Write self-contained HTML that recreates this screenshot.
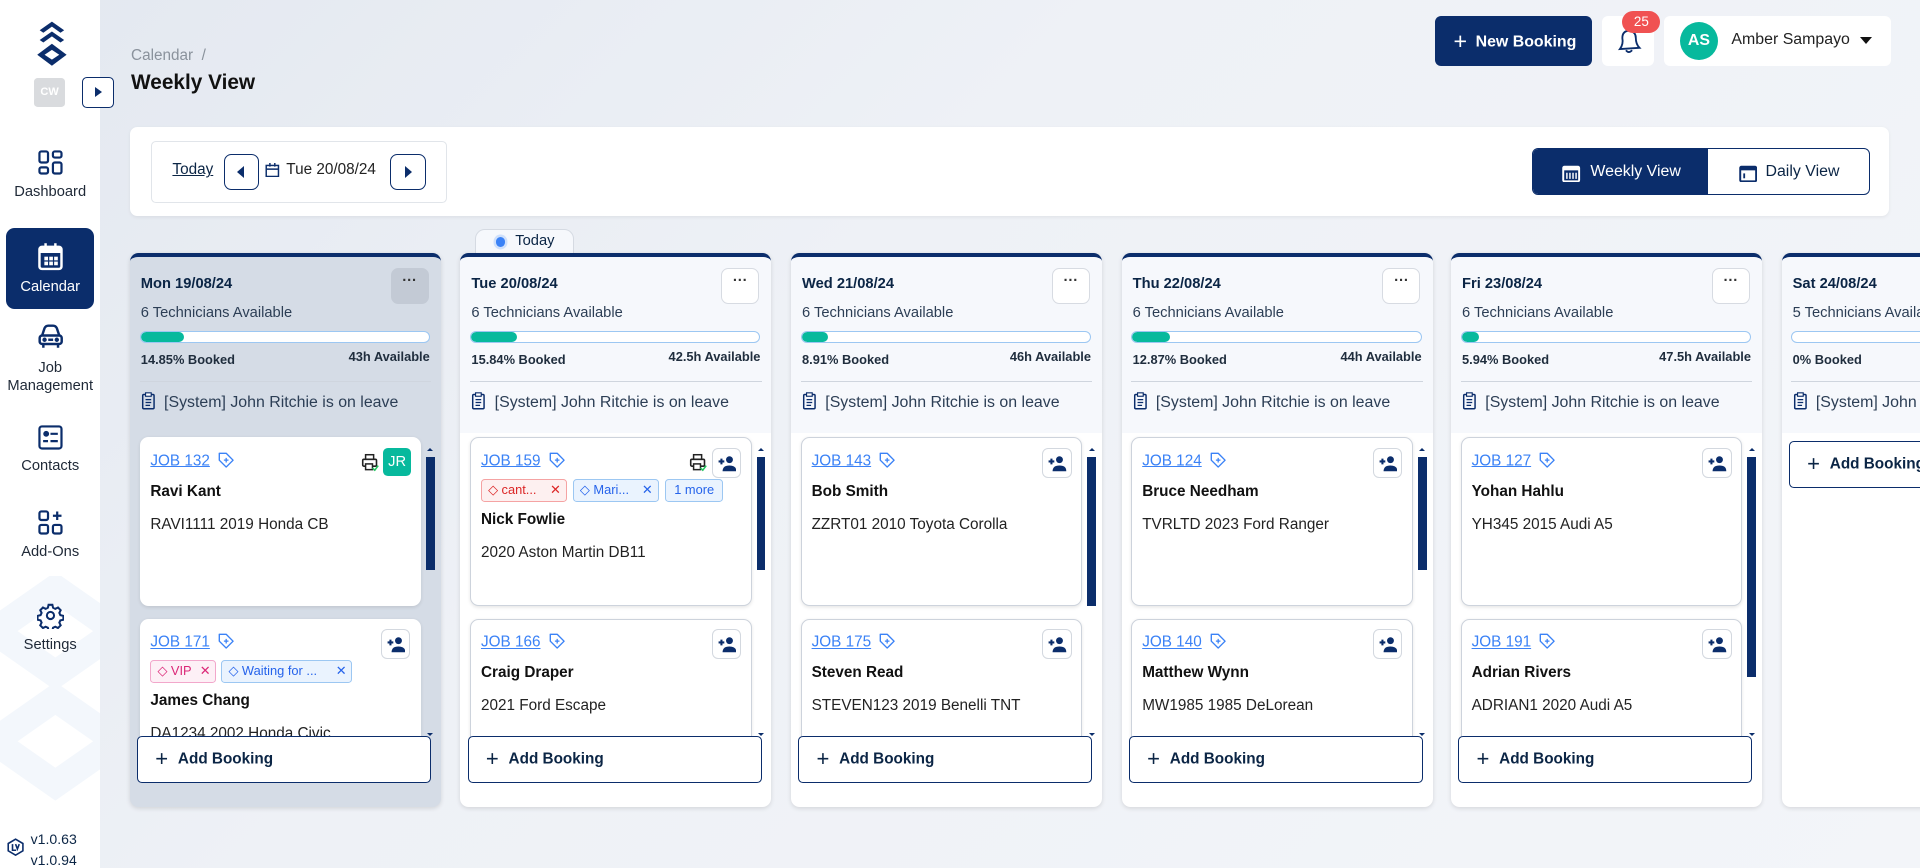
<!DOCTYPE html>
<html><head><meta charset="utf-8">
<style>
*{box-sizing:border-box;margin:0;padding:0}
html,body{width:1920px;height:868px;overflow:hidden}
body{font-family:"Liberation Sans",Arial,sans-serif;color:#1f2937;background:#eef1f6}
#root{zoom:1.22449;width:1568px;height:709px;position:relative;overflow:hidden;background:linear-gradient(135deg,#e3e8f0 0%,#eef1f6 40%,#f3f5f9 100%)}
.abs{position:absolute}
.side{left:0;top:0;width:82px;height:709px;background:#fff;overflow:hidden}
.nav{position:absolute;left:0;width:82px;text-align:center;font-size:12px;color:#1f2937}
.nav svg{display:block;margin:0 auto 6px}
.col{position:absolute;top:207px;width:254px;height:452px;border-radius:7px;border-top:4px solid #0b2d6b;background:#fff;box-shadow:0 1px 4px rgba(0,0,0,.12);overflow:hidden}
.col .hd{position:absolute;left:0;top:0;right:0;height:143px;background:#f6f8fc}
.col.mon,.col.mon .hd{background:#d5dce6}
.date{position:absolute;left:9px;top:15px;font-size:12px;font-weight:bold;color:#0b2545}
.dots{position:absolute;left:213px;top:9px;width:31px;height:29px;border-radius:6px;background:#fff;border:1px solid #d7dbe2;text-align:center;font-size:12px;line-height:20px;color:#333;font-weight:bold}
.mon .dots{background:#c3cad5;border-color:#c3cad5}
.tech{position:absolute;left:9px;top:39px;font-size:12px;color:#2c3e55}
.bar{position:absolute;left:8px;top:60px;width:237px;height:10px;border:1px solid #9cc7f2;border-radius:6px;background:#fff;overflow:hidden}
.bar i{display:block;height:100%;background:#07b99d;border-radius:6px}
.bk{position:absolute;left:9px;top:77px;font-size:10.5px;font-weight:bold;color:#1f2d3d}
.av{position:absolute;right:9px;top:75px;font-size:10.5px;font-weight:bold;color:#1f2d3d}
.div{position:absolute;left:8px;right:8px;top:101px;border-top:1px solid #cfd5de}
.sys{position:absolute;left:9px;top:109px;font-size:13px;color:#2c3e55;white-space:nowrap}
.sys svg{vertical-align:-3px;margin-right:6px}
.cards{position:absolute;left:0;top:143px;width:254px;height:250px;overflow:hidden}
.card{position:absolute;left:8px;width:230px;background:#fff;border:1px solid #cdd3dc;border-radius:7px;box-shadow:0 1px 3px rgba(0,0,0,.1)}
.mon .card{border-color:#fff}
.job{position:absolute;left:8px;top:10px;font-size:12.5px;color:#3b82f6;text-decoration:underline;white-space:nowrap}
.job svg{vertical-align:-3px;margin-left:6px}
.nm{position:absolute;left:8px;font-size:12.5px;font-weight:bold;color:#111}
.vh{position:absolute;left:8px;font-size:12.5px;color:#222;white-space:nowrap}
.act{position:absolute;right:8px;top:8px;width:24px;height:24px;border:1px solid #d3d8df;border-radius:5px;background:#fff}
.act svg{position:absolute;left:4px;top:4px}
.tag{position:absolute;top:33px;height:19px;border-radius:3px;font-size:10.5px;line-height:17px;padding-left:5px;white-space:nowrap}
.sb{position:absolute;left:242px;top:156px;width:7px;height:235px}
.sb i{position:absolute;left:0;top:7px;width:7px;height:92px;background:#0b2d6b}
.sb:before{content:"";position:absolute;left:1px;top:0;border:3px solid transparent;border-bottom:3px solid #0b2d6b;border-top:0}
.sb:after{content:"";position:absolute;left:1px;bottom:0;border:3px solid transparent;border-top:3px solid #0b2d6b;border-bottom:0}
.add{position:absolute;left:6px;top:391px;width:240px;height:38px;border:1px solid #0b2d6b;border-radius:4px;background:#fff;font-size:12.5px;font-weight:bold;color:#0b2545;line-height:36px;padding-left:14px}
.add span{font-size:18px;font-weight:normal;vertical-align:-2px;margin-right:8px}
</style></head><body><div id="root">

<!-- sidebar -->
<div class="abs side">
  <svg class="abs" style="left:-10px;top:470px" width="110" height="190" viewBox="0 0 110 190"><path d="M55 10 L105 45 L55 80 L5 45Z M55 100 L105 135 L55 170 L5 135Z" fill="none" stroke="#f3f7fc" stroke-width="22"/></svg>
  <svg class="abs" style="left:29px;top:15px" width="26" height="40" viewBox="0 0 26 40"><path d="M13 3 L23 10 L20 12 L13 7 L6 12 L3 10Z M13 11 L23 18 L20 20 L13 15 L6 20 L3 18Z M13 21 L25 30 L13 39 L1 30Z M13 26 L7 30 L13 34 L19 30Z" fill="#0b2d6b" fill-rule="evenodd"/></svg>
  <div class="abs" style="left:28px;top:64px;width:25px;height:23px;background:#d9dbde;border-radius:3px;color:#fff;font-size:9px;font-weight:bold;text-align:center;line-height:23px">CW</div>
  <div class="nav" style="top:122px"><svg width="22" height="22" viewBox="0 0 22 22" fill="none" stroke="#0b2d6b" stroke-width="1.8"><rect x="2" y="2" width="7" height="9" rx="1.5"/><rect x="13" y="2" width="7" height="5" rx="1.5"/><rect x="2" y="15" width="7" height="5" rx="1.5"/><rect x="13" y="11" width="7" height="9" rx="1.5"/></svg>Dashboard</div>
  <div class="abs" style="left:5px;top:186px;width:72px;height:66px;background:#0b2d6b;border-radius:7px"></div>
  <div class="nav" style="top:198px;color:#fff"><svg width="22" height="24" viewBox="0 0 22 24"><rect x="2" y="4" width="18" height="18" rx="2" fill="none" stroke="#fff" stroke-width="2"/><rect x="2" y="4" width="18" height="5" fill="#fff"/><rect x="6" y="1" width="2" height="5" fill="#fff"/><rect x="14" y="1" width="2" height="5" fill="#fff"/><g fill="#fff"><rect x="6" y="12" width="3" height="3"/><rect x="10" y="12" width="3" height="3"/><rect x="14" y="12" width="3" height="3"/><rect x="6" y="16" width="3" height="3"/><rect x="10" y="16" width="3" height="3"/><rect x="14" y="16" width="3" height="3"/></g></svg>Calendar</div>
  <div class="nav" style="top:263px;line-height:15px"><svg width="24" height="24" viewBox="0 0 24 24" fill="none" stroke="#0b2d6b" stroke-width="2"><path d="M5 11 L7 5 Q8 3 10 3 H14 Q16 3 17 5 L19 11"/><rect x="3" y="11" width="18" height="7" rx="2"/><path d="M6 18v3M18 18v3"/><circle cx="7" cy="14.5" r=".8" fill="#0b2d6b"/><circle cx="17" cy="14.5" r=".8" fill="#0b2d6b"/><path d="M10 14.5h4"/></svg>Job<br>Management</div>
  <div class="nav" style="top:346px"><svg width="22" height="22" viewBox="0 0 22 22" fill="none" stroke="#0b2d6b" stroke-width="1.8"><rect x="2" y="2" width="18" height="18" rx="2"/><circle cx="7.5" cy="8" r="1.5" fill="#0b2d6b"/><path d="M11 8h6M11 14h6M5 14h4"/></svg>Contacts</div>
  <div class="nav" style="top:416px"><svg width="22" height="22" viewBox="0 0 22 22" fill="none" stroke="#0b2d6b" stroke-width="1.8"><rect x="2" y="2" width="7" height="7" rx="1.5"/><rect x="2" y="13" width="7" height="7" rx="1.5"/><rect x="13" y="13" width="7" height="7" rx="1.5"/><path d="M16.5 2v7M13 5.5h7"/></svg>Add-Ons</div>
  <div class="nav" style="top:492px"><svg width="22" height="22" viewBox="0 0 24 24" fill="none" stroke="#0b2d6b" stroke-width="1.8"><circle cx="12" cy="12" r="3.2"/><path d="M10.3 2.5h3.4l.6 2.6 2 1 2.4-1.2 2.4 2.4-1.2 2.4.9 2 2.7.7v3.4l-2.7.6-.9 2 1.2 2.4-2.4 2.4-2.4-1.2-2 .9-.6 2.7h-3.4l-.6-2.7-2-.9-2.4 1.2-2.4-2.4 1.2-2.4-.9-2-2.7-.6v-3.4l2.7-.7.9-2-1.2-2.4 2.4-2.4 2.4 1.2 2-1z"/></svg>Settings</div>
  <svg class="abs" style="left:6px;top:684px" width="14" height="15" viewBox="0 0 14 15" fill="none" stroke="#0b2d6b" stroke-width="1.3"><path d="M7 1 L13 4.5 V10.5 L7 14 L1 10.5 V4.5Z"/><path d="M4.5 5v5h3M7 5l1.5 4 1.5-4"/></svg>
  <div class="abs" style="left:25px;top:677px;font-size:11.5px;color:#0b2545;line-height:17px">v1.0.63<br>v1.0.94</div>
</div>
<div class="abs" style="left:67px;top:63px;width:26px;height:25px;border:1px solid #0b2d6b;border-radius:4px;background:#fff"><div class="abs" style="left:10px;top:7px;border-left:6px solid #0b2d6b;border-top:4.5px solid transparent;border-bottom:4.5px solid transparent"></div></div>

<!-- header -->
<div class="abs" style="left:107px;top:38px;font-size:12.5px;color:#8a929c">Calendar &nbsp;/</div>
<div class="abs" style="left:107px;top:58px;font-size:17px;font-weight:bold;color:#111">Weekly View</div>

<div class="abs" style="left:1172px;top:13px;width:128px;height:41px;background:#0b2d6b;border-radius:5px;color:#fff;font-size:13px;font-weight:bold;line-height:41px;padding-left:15px"><span style="font-size:19px;font-weight:normal;vertical-align:-2px;margin-right:7px">+</span>New Booking</div>
<div class="abs" style="left:1308px;top:13px;width:43px;height:41px;background:#fff;border-radius:5px"><svg class="abs" style="left:11px;top:9px" width="22" height="24" viewBox="0 0 22 24" fill="none" stroke="#0b2d6b" stroke-width="1.5"><path d="M4 18 Q7 14 6 9 Q6 3 12 3 Q17 4 17 9 Q17 14 20 17 Z M9 19 Q11 22 14 19"/></svg></div>
<div class="abs" style="left:1325px;top:9px;width:31px;height:18px;background:#f05252;border-radius:9px;color:#fff;font-size:11px;text-align:center;line-height:18px">25</div>
<div class="abs" style="left:1359px;top:13px;width:185px;height:41px;background:#fff;border-radius:5px">
  <div class="abs" style="left:13px;top:5px;width:31px;height:31px;border-radius:50%;background:#07b99d;color:#fff;font-weight:bold;font-size:13px;text-align:center;line-height:31px">AS</div>
  <div class="abs" style="left:55px;top:12px;font-size:13px;color:#222">Amber Sampayo</div>
  <div class="abs" style="left:160px;top:17px;border-top:6px solid #111;border-left:5px solid transparent;border-right:5px solid transparent"></div>
</div>

<!-- toolbar -->
<div class="abs" style="left:106px;top:104px;width:1437px;height:72px;background:#fff;border-radius:6px;box-shadow:0 1px 3px rgba(0,0,0,.06)"></div>
<div class="abs" style="left:123px;top:115px;width:242px;height:51px;border:1px solid #e1e5ea;border-radius:4px;background:#fff">
  <div class="abs" style="left:17px;top:16px;font-size:12.5px;color:#0b2545;text-decoration:underline">Today</div>
  <div class="abs" style="left:59px;top:10px;width:29px;height:29px;border:1px solid #0b2d6b;border-radius:6px"><div class="abs" style="left:10px;top:9px;border-right:6px solid #0b2d6b;border-top:5px solid transparent;border-bottom:5px solid transparent"></div></div>
  <svg class="abs" style="left:93px;top:17px" width="12" height="12" viewBox="0 0 12 12" fill="none" stroke="#0b2d6b" stroke-width="1.2"><rect x="1" y="2" width="10" height="9"/><path d="M1 5h10M4 0v3M8 0v3"/></svg>
  <div class="abs" style="left:110px;top:16px;font-size:12.5px;color:#222">Tue 20/08/24</div>
  <div class="abs" style="left:195px;top:10px;width:29px;height:29px;border:1px solid #0b2d6b;border-radius:6px"><div class="abs" style="left:11px;top:9px;border-left:6px solid #0b2d6b;border-top:5px solid transparent;border-bottom:5px solid transparent"></div></div>
</div>
<div class="abs" style="left:1251px;top:121px;width:276px;height:38px;border:1px solid #0b2d6b;border-radius:5px;background:#fff;overflow:hidden">
  <div class="abs" style="left:0;top:0;width:143px;height:38px;background:#0b2d6b"></div>
  <svg class="abs" style="left:24px;top:11px" width="15" height="16" viewBox="0 0 15 16"><rect x="1" y="3" width="13" height="12" rx="1" fill="none" stroke="#fff" stroke-width="1.6"/><rect x="1" y="3" width="13" height="3" fill="#fff"/><path d="M4 8v5M6.5 8v5M9 8v5M11.5 8v5" stroke="#fff" stroke-width="1.2"/></svg>
  <div class="abs" style="left:47px;top:11px;font-size:13px;color:#fff">Weekly View</div>
  <svg class="abs" style="left:168px;top:11px" width="15" height="16" viewBox="0 0 15 16"><rect x="1" y="3" width="13" height="12" rx="1" fill="none" stroke="#0b2d6b" stroke-width="1.6"/><rect x="1" y="3" width="13" height="3" fill="#0b2d6b"/><rect x="3.5" y="8.5" width="1.5" height="4" fill="#0b2d6b"/></svg>
  <div class="abs" style="left:190px;top:11px;font-size:13px;color:#0b2545">Daily View</div>
</div>

<!-- Today tab -->
<div class="abs" style="left:388px;top:187px;width:81px;height:20px;background:#f6f8fc;border:1px solid #d5dae2;border-bottom:0;border-radius:8px 8px 0 0;font-size:12px;color:#0b2545;line-height:19px;padding-left:32px"><span class="abs" style="left:16px;top:6px;width:8px;height:8px;border-radius:50%;background:#3b82f6;box-shadow:0 0 0 2px #cfe0fb"></span>Today</div>

<svg width="0" height="0" style="position:absolute"><defs>
<symbol id="tg" viewBox="0 0 16 16"><path d="M2 2h6l6 6-6 6-6-6z" fill="none" stroke="#3b82f6" stroke-width="1.2" stroke-linejoin="round"/><path d="M8 6v4M6 8h4" stroke="#3b82f6" stroke-width="1.1"/></symbol>
<symbol id="ap" viewBox="0 0 16 16"><circle cx="10" cy="5" r="3" fill="#0b2d6b"/><path d="M4 15q0-5 6-5t6 5z" fill="#0b2d6b"/><path d="M3 4v5M0.5 6.5h5" stroke="#0b2d6b" stroke-width="1.8"/></symbol>
<symbol id="nt" viewBox="0 0 14 16"><rect x="1.5" y="2.5" width="10" height="12.5" rx="1" fill="none" stroke="#0b2d6b" stroke-width="1.3"/><rect x="4" y="1" width="5" height="3" fill="#fff" stroke="#0b2d6b" stroke-width="1"/><path d="M4 7h5M4 9.5h5M4 12h4" stroke="#0b2d6b" stroke-width="1.1"/></symbol>
<symbol id="pr" viewBox="0 0 16 16"><rect x="4" y="1.5" width="7" height="4" fill="none" stroke="#222" stroke-width="1.3"/><rect x="1.5" y="5.5" width="12" height="6" rx="1" fill="none" stroke="#222" stroke-width="1.4"/><rect x="4" y="9.5" width="6" height="5" fill="#fff" stroke="#222" stroke-width="1.3"/><path d="M10 13l2 2 3-4" stroke="#22c55e" stroke-width="1.3" fill="none"/></symbol>
</defs></svg>

<!-- MON -->
<div class="col mon" style="left:106px">
 <div class="hd"></div>
 <div class="date">Mon 19/08/24</div><div class="dots">···</div>
 <div class="tech">6 Technicians Available</div>
 <div class="bar"><i style="width:15%"></i></div>
 <div class="bk">14.85% Booked</div><div class="av">43h Available</div>
 <div class="div"></div>
 <div class="sys"><svg width="13" height="16"><use href="#nt"/></svg>[System] John Ritchie is on leave</div>
 <div class="cards">
  <div class="card" style="top:4px;height:138px">
   <div class="job">JOB 132<svg width="15" height="15"><use href="#tg"/></svg></div>
   <svg class="abs" style="left:180px;top:12px" width="15" height="15"><use href="#pr"/></svg>
   <div class="abs" style="left:198px;top:8px;width:23px;height:23px;border-radius:4px;background:#07b99d;color:#fff;font-size:12px;text-align:center;line-height:23px">JR</div>
   <div class="nm" style="top:36px">Ravi Kant</div><div class="vh" style="top:63px">RAVI1111 2019 Honda CB</div>
  </div>
  <div class="card" style="top:152px;height:130px">
   <div class="job">JOB 171<svg width="15" height="15"><use href="#tg"/></svg></div>
   <div class="act"><svg width="15" height="15"><use href="#ap"/></svg></div>
   <div class="tag" style="left:8px;width:54px;background:#fdf0f6;border:1px solid #f2a7cb;color:#db2777">◇ VIP <span style="position:absolute;right:4px">✕</span></div>
   <div class="tag" style="left:66px;width:107px;background:#eaf3fe;border:1px solid #9cc7f2;color:#2563eb">◇ Waiting for ... <span style="position:absolute;right:4px">✕</span></div>
   <div class="nm" style="top:59px">James Chang</div><div class="vh" style="top:86px">DA1234 2002 Honda Civic</div>
  </div>
 </div>
 <div class="sb"><i></i></div>
 <div class="add"><span>+</span>Add Booking</div>
</div>

<!-- TUE -->
<div class="col" style="left:376px">
 <div class="hd"></div>
 <div class="date">Tue 20/08/24</div><div class="dots">···</div>
 <div class="tech">6 Technicians Available</div>
 <div class="bar"><i style="width:16%"></i></div>
 <div class="bk">15.84% Booked</div><div class="av">42.5h Available</div>
 <div class="div"></div>
 <div class="sys"><svg width="13" height="16"><use href="#nt"/></svg>[System] John Ritchie is on leave</div>
 <div class="cards">
  <div class="card" style="top:4px;height:138px">
   <div class="job">JOB 159<svg width="15" height="15"><use href="#tg"/></svg></div>
   <svg class="abs" style="left:178px;top:12px" width="15" height="15"><use href="#pr"/></svg>
   <div class="act"><svg width="15" height="15"><use href="#ap"/></svg></div>
   <div class="tag" style="left:8px;width:70px;background:#fdf0f0;border:1px solid #f5a3a3;color:#dc2626">◇ cant... <span style="position:absolute;right:4px">✕</span></div>
   <div class="tag" style="left:83px;width:70px;background:#eaf3fe;border:1px solid #9cc7f2;color:#2563eb">◇ Mari... <span style="position:absolute;right:4px">✕</span></div>
   <div class="tag" style="left:158px;width:48px;background:#eaf3fe;border:1px solid #9cc7f2;color:#2563eb;padding-left:7px">1 more</div>
   <div class="nm" style="top:59px">Nick Fowlie</div><div class="vh" style="top:86px">2020 Aston Martin DB11</div>
  </div>
  <div class="card" style="top:152px;height:130px">
   <div class="job">JOB 166<svg width="15" height="15"><use href="#tg"/></svg></div>
   <div class="act"><svg width="15" height="15"><use href="#ap"/></svg></div>
   <div class="nm" style="top:36px">Craig Draper</div><div class="vh" style="top:63px">2021 Ford Escape</div>
  </div>
 </div>
 <div class="sb"><i></i></div>
 <div class="add"><span>+</span>Add Booking</div>
</div>

<!-- WED -->
<div class="col" style="left:646px">
 <div class="hd"></div>
 <div class="date">Wed 21/08/24</div><div class="dots">···</div>
 <div class="tech">6 Technicians Available</div>
 <div class="bar"><i style="width:9%"></i></div>
 <div class="bk">8.91% Booked</div><div class="av">46h Available</div>
 <div class="div"></div>
 <div class="sys"><svg width="13" height="16"><use href="#nt"/></svg>[System] John Ritchie is on leave</div>
 <div class="cards">
  <div class="card" style="top:4px;height:138px">
   <div class="job">JOB 143<svg width="15" height="15"><use href="#tg"/></svg></div>
   <div class="act"><svg width="15" height="15"><use href="#ap"/></svg></div>
   <div class="nm" style="top:36px">Bob Smith</div><div class="vh" style="top:63px">ZZRT01 2010 Toyota Corolla</div>
  </div>
  <div class="card" style="top:152px;height:130px">
   <div class="job">JOB 175<svg width="15" height="15"><use href="#tg"/></svg></div>
   <div class="act"><svg width="15" height="15"><use href="#ap"/></svg></div>
   <div class="nm" style="top:36px">Steven Read</div><div class="vh" style="top:63px">STEVEN123 2019 Benelli TNT</div>
  </div>
 </div>
 <div class="sb"><i style="height:122px"></i></div>
 <div class="add"><span>+</span>Add Booking</div>
</div>

<!-- THU -->
<div class="col" style="left:916px">
 <div class="hd"></div>
 <div class="date">Thu 22/08/24</div><div class="dots">···</div>
 <div class="tech">6 Technicians Available</div>
 <div class="bar"><i style="width:13%"></i></div>
 <div class="bk">12.87% Booked</div><div class="av">44h Available</div>
 <div class="div"></div>
 <div class="sys"><svg width="13" height="16"><use href="#nt"/></svg>[System] John Ritchie is on leave</div>
 <div class="cards">
  <div class="card" style="top:4px;height:138px">
   <div class="job">JOB 124<svg width="15" height="15"><use href="#tg"/></svg></div>
   <div class="act"><svg width="15" height="15"><use href="#ap"/></svg></div>
   <div class="nm" style="top:36px">Bruce Needham</div><div class="vh" style="top:63px">TVRLTD 2023 Ford Ranger</div>
  </div>
  <div class="card" style="top:152px;height:130px">
   <div class="job">JOB 140<svg width="15" height="15"><use href="#tg"/></svg></div>
   <div class="act"><svg width="15" height="15"><use href="#ap"/></svg></div>
   <div class="nm" style="top:36px">Matthew Wynn</div><div class="vh" style="top:63px">MW1985 1985 DeLorean</div>
  </div>
 </div>
 <div class="sb"><i style="height:92px"></i></div>
 <div class="add"><span>+</span>Add Booking</div>
</div>

<!-- FRI -->
<div class="col" style="left:1185px">
 <div class="hd"></div>
 <div class="date">Fri 23/08/24</div><div class="dots">···</div>
 <div class="tech">6 Technicians Available</div>
 <div class="bar"><i style="width:6%"></i></div>
 <div class="bk">5.94% Booked</div><div class="av">47.5h Available</div>
 <div class="div"></div>
 <div class="sys"><svg width="13" height="16"><use href="#nt"/></svg>[System] John Ritchie is on leave</div>
 <div class="cards">
  <div class="card" style="top:4px;height:138px">
   <div class="job">JOB 127<svg width="15" height="15"><use href="#tg"/></svg></div>
   <div class="act"><svg width="15" height="15"><use href="#ap"/></svg></div>
   <div class="nm" style="top:36px">Yohan Hahlu</div><div class="vh" style="top:63px">YH345 2015 Audi A5</div>
  </div>
  <div class="card" style="top:152px;height:130px">
   <div class="job">JOB 191<svg width="15" height="15"><use href="#tg"/></svg></div>
   <div class="act"><svg width="15" height="15"><use href="#ap"/></svg></div>
   <div class="nm" style="top:36px">Adrian Rivers</div><div class="vh" style="top:63px">ADRIAN1 2020 Audi A5</div>
  </div>
 </div>
 <div class="sb"><i style="height:180px"></i></div>
 <div class="add"><span>+</span>Add Booking</div>
</div>

<!-- SAT -->
<div class="col" style="left:1455px">
 <div class="hd"></div>
 <div class="date">Sat 24/08/24</div>
 <div class="tech">5 Technicians Available</div>
 <div class="bar"><i style="width:0"></i></div>
 <div class="bk">0% Booked</div>
 <div class="div"></div>
 <div class="sys"><svg width="13" height="16"><use href="#nt"/></svg>[System] John Ritchie is on leave</div>
 <div class="add" style="top:150px"><span>+</span>Add Booking</div>
</div>

</div></body></html>
